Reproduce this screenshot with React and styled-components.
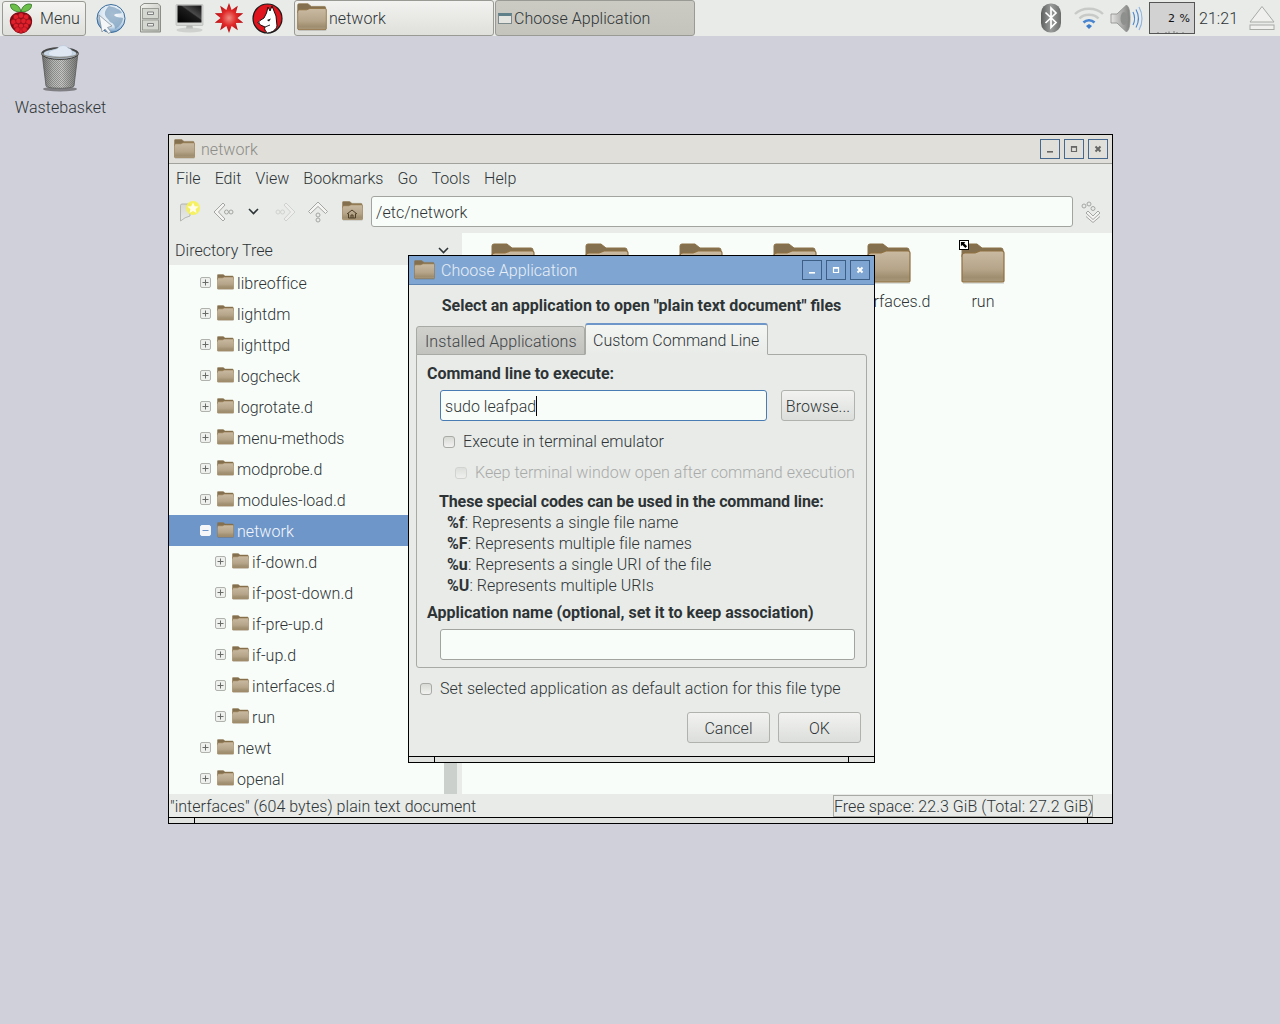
import React from 'react';
import styled, { createGlobalStyle } from 'styled-components';

const treeItems = [
    { name: 'libreoffice', level: 0 },
    { name: 'lightdm', level: 0 },
    { name: 'lighttpd', level: 0 },
    { name: 'logcheck', level: 0 },
    { name: 'logrotate.d', level: 0 },
    { name: 'menu-methods', level: 0 },
    { name: 'modprobe.d', level: 0 },
    { name: 'modules-load.d', level: 0 },
    { name: 'network', level: 0, open: true },
    { name: 'if-down.d', level: 1 },
    { name: 'if-post-down.d', level: 1 },
    { name: 'if-pre-up.d', level: 1 },
    { name: 'if-up.d', level: 1 },
    { name: 'interfaces.d', level: 1 },
    { name: 'run', level: 1 },
    { name: 'newt', level: 0 },
    { name: 'openal', level: 0 },
];

const menuItems = ['File', 'Edit', 'View', 'Bookmarks', 'Go', 'Tools', 'Help'];

const codes = [
    ['%f', ': Represents a single file name'],
    ['%F', ': Represents multiple file names'],
    ['%u', ': Represents a single URI of the file'],
    ['%U', ': Represents multiple URIs'],
];

const iconFolders = [
    { label: '' },
    { label: '' },
    { label: '' },
    { label: '' },
    { label: 'interfaces.d' },
    { label: 'run', link: true },
];

function FolderIcon({ size = 16, id = 'fld' }) {
    return (
        <svg width={size} height={size} viewBox="0 0 44 44" style={{ display: 'block', flex: 'none' }}>
            <defs>
                <linearGradient id={id} x1="0" y1="0" x2="0" y2="1">
                    <stop offset="0" stopColor="#c9baa2" />
                    <stop offset="0.6" stopColor="#b5a488" />
                    <stop offset="0.85" stopColor="#a08e70" />
                    <stop offset="1" stopColor="#a8977a" />
                </linearGradient>
            </defs>
            <path d="M1 3 Q1 1 3 1 H16 L21 5 H40 Q42 5 42 7 V14 H1 Z" fill="#84704f" stroke="#8b7148" strokeWidth="1" />
            <path d="M1 38 V13 Q1 10 4 10 H14 L19 8 H41 Q43 8 43 10 V38 Q43 39 41 39 H3 Q1 39 1 38 Z" fill={`url(#${id})`} stroke="#8f7040" strokeWidth="1.2" />
            <rect x="2" y="39.5" width="41" height="1.5" fill="#000" opacity="0.12" />
        </svg>
    );
}

function Raspberry() {
    const berries = [[8, 14], [13, 12.5], [18, 14], [5.5, 19], [10.5, 18], [15.5, 18], [20.5, 19], [8, 23], [13, 23], [18, 23], [13, 27.5], [9.5, 26.5], [16.5, 26.5]];
    return (
        <svg width="26" height="31" viewBox="0 0 26 31">
            <path d="M12.5 9 C8 9 2 7 2.5 1.5 C6 0 11 2 12.5 7 Z" fill="#6cc04a" stroke="#2d6b22" strokeWidth="0.8" />
            <path d="M13.5 9 C18 9 24 7 23.5 1.5 C20 0 15 2 13.5 7 Z" fill="#6cc04a" stroke="#2d6b22" strokeWidth="0.8" />
            <path d="M13 9 C22 9 25 15 24 20 C23 26 17 30.5 13 30.5 C9 30.5 3 26 2 20 C1 15 4 9 13 9 Z" fill="#7a0b14" />
            {berries.map(([x, y], i) => (
                <circle key={i} cx={x} cy={y} r="2.7" fill="#e0212b" stroke="#8c0f18" strokeWidth="0.5" />
            ))}
        </svg>
    );
}

function Globe() {
    return (
        <svg width="30" height="31" viewBox="0 0 30 31">
            <defs>
                <radialGradient id="globeFill" cx="0.55" cy="0.35" r="0.75">
                    <stop offset="0" stopColor="#ffffff" />
                    <stop offset="0.6" stopColor="#d4e3ef" />
                    <stop offset="1" stopColor="#2a6aa8" />
                </radialGradient>
            </defs>
            <circle cx="15" cy="15.5" r="14" fill="url(#globeFill)" stroke="#3c6c9c" strokeWidth="1" />
            <path d="M13 3 C18 4 24 6 26 10 C23 11 20 10 18 12 C20 15 24 14 27 15 C27 20 22 25 19 26 C19 22 17 20 14 19 C12 15 8 14 9 9 C10 6 11 5 13 3 Z" fill="#5d86ad" opacity="0.55" />
            <path d="M3 12 L6 29 L9 26 L12.5 30.5 L15 29 L11.5 24.5 L16 23 Z" fill="#f4f6f8" stroke="#8a949e" strokeWidth="0.8" />
        </svg>
    );
}

function Cabinet() {
    return (
        <svg width="23" height="30" viewBox="0 0 23 30">
            <defs>
                <linearGradient id="cabFill" x1="0" y1="0" x2="1" y2="1">
                    <stop offset="0" stopColor="#f2f2ee" />
                    <stop offset="1" stopColor="#b8bab4" />
                </linearGradient>
            </defs>
            <path d="M1.5 3 L5 0.5 H19 L21.5 3 V29 H1.5 Z" fill="url(#cabFill)" stroke="#8c8e88" strokeWidth="1" />
            <rect x="3.5" y="5.5" width="16" height="10" fill="#d4d6d0" stroke="#8c8e88" strokeWidth="0.8" />
            <rect x="3.5" y="17" width="16" height="10" fill="#d4d6d0" stroke="#8c8e88" strokeWidth="0.8" />
            <path d="M8.5 9 H14.5 V11.5 H8.5 Z M8.5 20.5 H14.5 V23 H8.5 Z" fill="#eeeeea" stroke="#66686a" strokeWidth="0.8" />
        </svg>
    );
}

function Monitor() {
    return (
        <svg width="29" height="29" viewBox="0 0 29 29">
            <defs>
                <linearGradient id="screenFill" x1="0" y1="1" x2="1" y2="0">
                    <stop offset="0" stopColor="#000" />
                    <stop offset="0.55" stopColor="#1c1c1c" />
                    <stop offset="0.6" stopColor="#4a4a4a" />
                    <stop offset="1" stopColor="#111" />
                </linearGradient>
            </defs>
            <rect x="1" y="0.5" width="27" height="21" rx="1" fill="#d5d7d5" stroke="#b0b2b0" strokeWidth="0.6" />
            <rect x="2.5" y="1.5" width="24" height="17" fill="url(#screenFill)" />
            <path d="M11.5 21.5 H17.5 L18 25 H11 Z" fill="#b4b6b4" />
            <ellipse cx="14.5" cy="26" rx="13" ry="2.5" fill="#c8cac8" opacity="0.8" />
        </svg>
    );
}

function MathStar() {
    const pts = [];
    for (let i = 0; i < 20; i++) {
        const r = i % 2 === 0 ? 15 : 8.5;
        const a = (Math.PI * i) / 10 - Math.PI / 2;
        pts.push(`${15 + r * Math.cos(a)},${15 + r * Math.sin(a)}`);
    }
    return (
        <svg width="30" height="30" viewBox="0 0 30 30">
            <defs>
                <radialGradient id="starFill" cx="0.5" cy="0.5" r="0.5">
                    <stop offset="0" stopColor="#f08a80" />
                    <stop offset="0.5" stopColor="#e02a2a" />
                    <stop offset="1" stopColor="#b50d12" />
                </radialGradient>
            </defs>
            <polygon points={pts.join(' ')} fill="url(#starFill)" />
        </svg>
    );
}

function Wolf() {
    return (
        <svg width="31" height="31" viewBox="0 0 31 31">
            <circle cx="15.5" cy="15.5" r="14.5" fill="#e0141c" stroke="#1a1a1a" strokeWidth="1.2" />
            <path d="M20 3 L24 13 L25 23 C24 27 20 29.5 15.5 30 C13 28 12 26 13 24 L8.5 22 L6 19.5 L8 17.5 L12 15 L14.5 10 L16 4 L18 8 Z" fill="#fff" stroke="#111" strokeWidth="1" />
            <path d="M15 17 L19 15.5 L17 18.5 Z M6 19.5 L8 19.5 L7.5 21 Z" fill="#111" />
            <path d="M13 24 L18 22" stroke="#111" strokeWidth="0.9" fill="none" />
        </svg>
    );
}

function Trash() {
    return (
        <svg width="40" height="48" viewBox="1 0 40 48">
            <defs>
                <linearGradient id="binFill" x1="0" y1="0" x2="1" y2="0">
                    <stop offset="0" stopColor="#6f716e" />
                    <stop offset="0.3" stopColor="#b4b6b3" />
                    <stop offset="0.55" stopColor="#c6c8c5" />
                    <stop offset="1" stopColor="#747673" />
                </linearGradient>
                <pattern id="binMesh" width="2" height="2" patternUnits="userSpaceOnUse">
                    <rect x="0" y="0" width="1" height="1" fill="#555" opacity="0.45" />
                    <rect x="1" y="1" width="1" height="1" fill="#555" opacity="0.45" />
                </pattern>
            </defs>
            <ellipse cx="20" cy="45" rx="17" ry="2.6" fill="#3c3c3c" opacity="0.55" />
            <path d="M2 9 L6 42 C7 45 33 45 34 42 L38 9 Z" fill="url(#binFill)" stroke="#5a5c5a" strokeWidth="0.8" />
            <path d="M2 9 L6 42 C7 45 33 45 34 42 L38 9 Z" fill="url(#binMesh)" />
            <ellipse cx="20" cy="9.5" rx="18.5" ry="6" fill="#4e504e" stroke="#333" strokeWidth="0.8" />
            <ellipse cx="20" cy="10" rx="16.5" ry="4.8" fill="#c9d6e6" />
            <path d="M8 10 C9 6 15 6 18 4 C20 0.5 27 1 28 4 C32 5 33 8 32 11 C26 14 13 14 8 10 Z" fill="#dfe8f2" stroke="#b4c4d6" strokeWidth="0.6" />
            <path d="M2 9 C3 15 37 15 38 9" fill="none" stroke="#8b8d8a" strokeWidth="1.4" />
        </svg>
    );
}

function Bluetooth() {
    return (
        <svg width="22" height="30" viewBox="0 0 22 30">
            <defs>
                <linearGradient id="btFill" x1="0" y1="0" x2="1" y2="0">
                    <stop offset="0" stopColor="#5d5f5f" />
                    <stop offset="0.5" stopColor="#9a9c9c" />
                    <stop offset="1" stopColor="#6a6c6c" />
                </linearGradient>
            </defs>
            <rect x="1" y="0.5" width="20" height="29" rx="9.5" fill="url(#btFill)" />
            <path d="M5.5 9.5 L16 19.5 L11 24.5 V5 L16 10 L5.5 20" fill="none" stroke="#fff" strokeWidth="1.7" />
        </svg>
    );
}

function Wifi() {
    return (
        <svg width="30" height="24" viewBox="0 0 30 24">
            <path d="M1 8 C8 1 22 1 29 8" fill="none" stroke="#c8cac8" strokeWidth="2.4" />
            <path d="M5.5 12.5 C10 7.5 20 7.5 24.5 12.5" fill="none" stroke="#c8cac8" strokeWidth="2.4" />
            <path d="M9.5 16.5 C12.5 13.5 17.5 13.5 20.5 16.5" fill="none" stroke="#4a86d0" strokeWidth="2.6" />
            <path d="M12 20 L15 18 L18 20 L15 23 Z" fill="#3d7cc8" />
        </svg>
    );
}

function Speaker() {
    return (
        <svg width="34" height="29" viewBox="0 0 34 29">
            <defs>
                <linearGradient id="spkFill" x1="0" y1="0" x2="1" y2="0">
                    <stop offset="0" stopColor="#e6e6e4" />
                    <stop offset="1" stopColor="#7e807e" />
                </linearGradient>
            </defs>
            <path d="M1 10 H7 L16 1.5 C19 1 20 8 20 14.5 C20 21 19 28 16 27.5 L7 19 H1 Z" fill="url(#spkFill)" stroke="#8a8c8a" strokeWidth="0.8" />
            <ellipse cx="14" cy="14.5" rx="3.5" ry="6.5" fill="#8e908e" />
            <path d="M23 8 C25 12 25 17 23 21" fill="none" stroke="#4a86d0" strokeWidth="1.1" />
            <path d="M26 5.5 C29 11 29 18 26 23.5" fill="none" stroke="#4a86d0" strokeWidth="1.1" />
            <path d="M29 3 C33 10 33 19 29 26" fill="none" stroke="#8fb4e0" strokeWidth="1.1" />
        </svg>
    );
}

function Eject() {
    return (
        <svg width="26" height="26" viewBox="0 0 26 26">
            <path d="M13 1.5 L25 17 H1 Z" fill="#f0f1ee" stroke="#a8aaa6" strokeWidth="1" />
            <rect x="1" y="20" width="24" height="4.5" fill="#f0f1ee" stroke="#a8aaa6" strokeWidth="1" />
        </svg>
    );
}

function NewFolderStar() {
    return (
        <svg width="24" height="24" viewBox="0 0 24 24">
            <defs>
                <linearGradient id="pageFill" x1="0" y1="0" x2="0" y2="1">
                    <stop offset="0" stopColor="#d8d8d4" />
                    <stop offset="1" stopColor="#e8ebe8" />
                </linearGradient>
            </defs>
            <path d="M2.5 21 V5.5 Q2.5 4 4 4 H12 V16 Q7 17 2.5 21 Z" fill="url(#pageFill)" stroke="#a8aaa6" strokeWidth="0.8" />
            <circle cx="15" cy="8" r="7" fill="#f7f24a" opacity="0.85" />
            <path d="M15 2.5 L16.7 6.2 L20.6 6.6 L17.6 9.2 L18.5 13 L15 11 L11.5 13 L12.4 9.2 L9.4 6.6 L13.3 6.2 Z" fill="#fffde8" />
        </svg>
    );
}

function ArrowIcon({ dir, dim }) {
    const stroke = dim ? '#d0d2ce' : '#a4a6a2';
    return (
        <svg width="22" height="22" viewBox="0 0 22 22" style={{ transform: dir === 'right' ? 'scaleX(-1)' : 'none' }}>
            <path d="M11 2 L2 11 L11 20 L13 18 L6.5 11 L13 4 Z" fill={dim ? '#eeeeec' : '#f4f4f2'} stroke={stroke} strokeWidth="1" />
            <circle cx="14.5" cy="11" r="2" fill="none" stroke={stroke} strokeWidth="1" />
            <circle cx="19" cy="11" r="2" fill="none" stroke={stroke} strokeWidth="1" />
        </svg>
    );
}

function UpIcon() {
    return (
        <svg width="22" height="22" viewBox="0 0 22 22">
            <path d="M11 1 L1.5 10.5 L3.5 12.5 L11 5.5 L18.5 12.5 L20.5 10.5 Z" fill="#f4f4f2" stroke="#a4a6a2" strokeWidth="1" />
            <circle cx="11" cy="14" r="2" fill="none" stroke="#a4a6a2" strokeWidth="1" />
            <circle cx="11" cy="19" r="2" fill="none" stroke="#a4a6a2" strokeWidth="1" />
        </svg>
    );
}

function HomeFolder() {
    return (
        <HomeWrap>
            <FolderIcon size={21} id="homeFld" />
            <HomeGlyph viewBox="0 0 12 10" width="12" height="10">
                <path d="M1 5 L6 1 L11 5 M2.5 4.5 V9 H9.5 V4.5 M5 9 V6 H7 V9" fill="none" stroke="#4e3e26" strokeWidth="1" />
            </HomeGlyph>
        </HomeWrap>
    );
}

function Chevron() {
    return (
        <svg width="11" height="7" viewBox="0 0 11 7">
            <path d="M1 1 L5.5 5.5 L10 1" fill="none" stroke="#2e3436" strokeWidth="1.6" />
        </svg>
    );
}

function DownDots() {
    return (
        <svg width="20" height="22" viewBox="0 0 20 22">
            <circle cx="3" cy="5" r="2" fill="none" stroke="#a4a6a2" strokeWidth="1" />
            <circle cx="8" cy="3" r="2" fill="none" stroke="#a4a6a2" strokeWidth="1" />
            <circle cx="12" cy="7.5" r="2" fill="none" stroke="#a4a6a2" strokeWidth="1" />
            <path d="M5 12 L12 18.5 L19 12 L17 10 L12 15 L7 10 Z M5 15.5 L12 21.5 L19 15.5" fill="#f4f4f2" stroke="#a4a6a2" strokeWidth="1" />
        </svg>
    );
}

function CpuGraph() {
    return (
        <CpuLines width="44" height="6" viewBox="0 0 44 6">
            <path d="M8 6 V5 M16 6 V5 M19 6 V4.5 M24 6 V4 M27 6 V5 M33 6 V5" stroke="#77797a" strokeWidth="1" />
        </CpuLines>
    );
}

function Expander({ open }) {
    return (
        <ExpanderBox $open={open}>
            <svg width="9" height="9" viewBox="0 0 9 9">
                <path d={open ? 'M1.5 4.5 H7.5' : 'M1.5 4.5 H7.5 M4.5 1.5 V7.5'} stroke={open ? '#6f96c8' : '#6a6c6a'} strokeWidth="1" fill="none" />
            </svg>
        </ExpanderBox>
    );
}

function WindowButtons({ $dark }) {
    const color = $dark ? '#fff' : '#666';
    return (
        <ButtonRow>
            <WinButton $dark={$dark}>
                <svg width="10" height="10" viewBox="0 0 10 10"><rect x="2" y="7" width="6" height="1.6" fill={color} /></svg>
            </WinButton>
            <WinButton $dark={$dark}>
                <svg width="10" height="10" viewBox="0 0 10 10"><path d="M2.5 2.5 H7.5 V7.5 H2.5 Z" fill="none" stroke={color} strokeWidth="1.2" /><rect x="2" y="2" width="6" height="1.8" fill={color} /></svg>
            </WinButton>
            <WinButton $dark={$dark}>
                <svg width="10" height="10" viewBox="0 0 10 10"><path d="M2.5 2.5 L7.5 7.5 M7.5 2.5 L2.5 7.5" stroke={color} strokeWidth="2" /></svg>
            </WinButton>
        </ButtonRow>
    );
}

export default function App() {
    return (
        <Desktop>
            <GlobalStyle />
            <Panel>
                <MenuButton>
                    <Raspberry />
                    <span>Menu</span>
                </MenuButton>
                <Launcher $w={39} $ml={5}><Globe /></Launcher>
                <Launcher $w={40}><Cabinet /></Launcher>
                <Launcher $w={39}><Monitor /></Launcher>
                <Launcher $w={39}><MathStar /></Launcher>
                <Launcher $w={39}><Wolf /></Launcher>
                <TaskButton $ml={7}>
                    <FolderIcon size={30} id="taskFld" />
                    <span>network</span>
                </TaskButton>
                <TaskButton $active $ml={1}>
                    <TaskMiniWindow />
                    <span>Choose Application</span>
                </TaskButton>
                <Tray>
                    <TraySlot $w={38}><Bluetooth /></TraySlot>
                    <TraySlot $w={38}><Wifi /></TraySlot>
                    <TraySlot $w={38}><Speaker /></TraySlot>
                    <CpuBox>
                        <CpuValue>2 %</CpuValue>
                        <CpuGraph />
                    </CpuBox>
                    <Clock>21:21</Clock>
                    <TraySlot $w={30}><Eject /></TraySlot>
                </Tray>
            </Panel>

            <DesktopIcon>
                <Trash />
                <span>Wastebasket</span>
            </DesktopIcon>

            <ManagerWindow>
                <TitleBar>
                    <FolderIcon size={21} id="winFld" />
                    <TitleText>network</TitleText>
                    <WindowButtons />
                </TitleBar>
                <MenuBar>
                    {menuItems.map((item) => <MenuItem key={item}>{item}</MenuItem>)}
                </MenuBar>
                <Toolbar>
                    <ToolSlot $w={24}><NewFolderStar /></ToolSlot>
                    <ToolSlot $w={22} $ml={10}><ArrowIcon dir="left" /></ToolSlot>
                    <ToolSlot $w={16} $ml={11}><Chevron /></ToolSlot>
                    <ToolSlot $w={22} $ml={14}><ArrowIcon dir="right" dim /></ToolSlot>
                    <ToolSlot $w={22} $ml={10}><UpIcon /></ToolSlot>
                    <ToolSlot $w={22} $ml={12}><HomeFolder /></ToolSlot>
                    <AddressBar>/etc/network</AddressBar>
                    <ToolSlot $w={20} $ml={8}><DownDots /></ToolSlot>
                </Toolbar>
                <Panes>
                    <SidePane>
                        <SideHeader>
                            <span>Directory Tree</span>
                            <Chevron />
                        </SideHeader>
                        <SideBody>
                            <Tree>
                                {treeItems.map((item) => (
                                    <TreeRow key={item.name} $level={item.level} $selected={item.open}>
                                        <Expander open={item.open} />
                                        <FolderIcon size={17} id={`tree-${item.name}`} />
                                        <span>{item.name}</span>
                                    </TreeRow>
                                ))}
                            </Tree>
                            <Trough />
                        </SideBody>
                    </SidePane>
                    <IconView>
                        {iconFolders.map((f, i) => (
                            <IconCell key={i}>
                                <FolderIcon size={44} id={`big-${i}`} />
                                {f.link && <LinkBadge><svg width="8" height="8" viewBox="0 0 9 9"><path d="M1 1 H6 L4.6 2.6 L8 6 L6 8 L2.6 4.6 L1 6 Z" fill="#000" /></svg></LinkBadge>}
                                <span>{f.label}</span>
                            </IconCell>
                        ))}
                    </IconView>
                </Panes>
                <StatusBar>
                    <StatusText>"interfaces" (604 bytes) plain text document</StatusText>
                    <FreeSpace>Free space: 22.3 GiB (Total: 27.2 GiB)</FreeSpace>
                </StatusBar>
                <ResizeStrip $left={25} $right={24} />
            </ManagerWindow>

            <Dialog>
                <DialogTitle>
                    <FolderIcon size={21} id="dlgFld" />
                    <DialogTitleText>Choose Application</DialogTitleText>
                    <WindowButtons $dark />
                </DialogTitle>
                <DialogBody>
                    <Heading>Select an application to open "plain text document" files</Heading>
                    <Tabs>
                        <Tab $w={169}>Installed Applications</Tab>
                        <Tab $w={183} $active>Custom Command Line</Tab>
                    </Tabs>
                    <Frame>
                        <BoldLabel>Command line to execute:</BoldLabel>
                        <CommandRow>
                            <TextField $focus>sudo leafpad<Caret /></TextField>
                            <PushButton $w={74}>Browse...</PushButton>
                        </CommandRow>
                        <CheckRow $ml={16} $mt={10}>
                            <CheckBox />
                            <span>Execute in terminal emulator</span>
                        </CheckRow>
                        <CheckRow $ml={28} $mt={10} $disabled>
                            <CheckBox $disabled />
                            <span>Keep terminal window open after command execution</span>
                        </CheckRow>
                        <CodesTitle>These special codes can be used in the command line:</CodesTitle>
                        <CodeList>
                            {codes.map(([code, text]) => (
                                <CodeLine key={code}><b>{code}</b>{text}</CodeLine>
                            ))}
                        </CodeList>
                        <NameLabel>Application name (optional, set it to keep association)</NameLabel>
                        <NameField />
                    </Frame>
                    <CheckRow $ml={4} $mt={10}>
                        <CheckBox />
                        <span>Set selected application as default action for this file type</span>
                    </CheckRow>
                    <DialogActions>
                        <PushButton $w={83}>Cancel</PushButton>
                        <PushButton $w={83}>OK</PushButton>
                    </DialogActions>
                </DialogBody>
                <ResizeStrip $left={25} $right={25} />
            </Dialog>
        </Desktop>
    );
}


// styled component
const GlobalStyle = createGlobalStyle`
    html, body {
        margin: 0;
        padding: 0;
        height: 100%;
    }
    body {
        font-family: Roboto, "Liberation Sans", sans-serif;
        font-weight: 300;
        font-size: 16px;
        letter-spacing: 0.04px;
        color: #2e3436;
    }
`

const Desktop = styled.div`
    position: relative;
    width: 1280px;
    height: 1024px;
    overflow: hidden;
    background: #d0d0da;
`

const Panel = styled.div`
    display: flex;
    align-items: center;
    height: 36px;
    padding-left: 2px;
    box-sizing: border-box;
    background: #e8ebe8;
`

const MenuButton = styled.div`
    display: flex;
    align-items: center;
    gap: 6px;
    box-sizing: border-box;
    width: 84px;
    height: 35px;
    padding-left: 5px;
    border: 1px solid #9a9a94;
    border-radius: 3px;
    background: linear-gradient(#f4f5f2, #dedfdb);
`

const Launcher = styled.div`
    display: flex;
    align-items: center;
    justify-content: center;
    width: ${(p) => p.$w}px;
    margin-left: ${(p) => p.$ml || 0}px;
`

const TaskButton = styled.div`
    display: flex;
    align-items: center;
    box-sizing: border-box;
    width: 200px;
    height: 36px;
    margin-left: ${(p) => p.$ml}px;
    padding-left: 2px;
    gap: 2px;
    overflow: hidden;
    border: 1px solid #9a9a94;
    border-radius: 3px;
    background: ${(p) => (p.$active ? 'linear-gradient(#cbcbc4, #c4c4bd)' : 'linear-gradient(#f2f3f0, #dfdfdb)')};
`

const TaskMiniWindow = styled.div`
    flex: none;
    width: 14px;
    height: 11px;
    box-sizing: border-box;
    border: 1px solid #7d8a8c;
    border-top: 3px solid #5f8088;
    background: #e4e4e0;
`

const Tray = styled.div`
    display: flex;
    align-items: center;
    margin-left: auto;
    padding-right: 3px;
`

const TraySlot = styled.div`
    display: flex;
    align-items: center;
    justify-content: center;
    width: ${(p) => p.$w}px;
`

const CpuBox = styled.div`
    position: relative;
    display: flex;
    align-items: center;
    justify-content: flex-end;
    box-sizing: border-box;
    width: 46px;
    height: 32px;
    margin-left: 3px;
    padding-right: 4px;
    border: 1px solid #555;
    background: #d2d2d2;
`

const CpuLines = styled.svg`
    position: absolute;
    left: 0;
    bottom: 0;
`

const CpuValue = styled.span`
    font-family: "DejaVu Sans", sans-serif;
    font-weight: 400;
    font-size: 11px;
    color: #111;
    white-space: pre;
    word-spacing: 1px;
`

const Clock = styled.div`
    width: 52px;
    padding-left: 4px;
    box-sizing: border-box;
`

const DesktopIcon = styled.div`
    position: absolute;
    left: 0;
    top: 44px;
    width: 121px;
    display: flex;
    flex-direction: column;
    align-items: center;
    gap: 6px;
    line-height: 20px;
`

const ManagerWindow = styled.div`
    position: absolute;
    left: 168px;
    top: 134px;
    width: 945px;
    height: 690px;
    box-sizing: border-box;
    display: flex;
    flex-direction: column;
    border: 1px solid #000;
    background: #e8ebe8;
`

const TitleBar = styled.div`
    display: flex;
    align-items: center;
    flex: none;
    box-sizing: border-box;
    height: 29px;
    padding: 0 4px 0 5px;
    background: #e0dfd9;
    border-bottom: 1px solid #a2a29c;
`

const TitleText = styled.span`
    margin-left: 6px;
    color: #8c8c88;
`

const ButtonRow = styled.div`
    display: flex;
    gap: 4px;
    margin-left: auto;
`

const WinButton = styled.div`
    display: flex;
    align-items: center;
    justify-content: center;
    box-sizing: border-box;
    width: 20px;
    height: 20px;
    border: 1px solid ${(p) => (p.$dark ? '#3d5f86' : '#46688e')};
`

const MenuBar = styled.div`
    display: flex;
    flex: none;
    height: 29px;
    align-items: center;
`

const MenuItem = styled.div`
    padding: 0 7px;
`

const Toolbar = styled.div`
    display: flex;
    align-items: center;
    flex: none;
    box-sizing: border-box;
    height: 40px;
    padding: 0 0 3px 9px;
`

const ToolSlot = styled.div`
    display: flex;
    align-items: center;
    justify-content: center;
    flex: none;
    width: ${(p) => p.$w}px;
    margin-left: ${(p) => p.$ml || 0}px;
`

const HomeWrap = styled.div`
    position: relative;
`

const HomeGlyph = styled.svg`
    position: absolute;
    left: 4px;
    top: 8px;
`

const AddressBar = styled.div`
    flex: none;
    width: 702px;
    height: 31px;
    margin-left: 8px;
    box-sizing: border-box;
    padding: 1px 0 0 4px;
    line-height: 29px;
    border: 1px solid #a2a4a0;
    border-radius: 3px;
    background: #f9fdf9;
`

const Panes = styled.div`
    display: flex;
    flex: 1;
    min-height: 0;
`

const SidePane = styled.div`
    display: flex;
    flex-direction: column;
    flex: none;
    width: 288px;
`

const SideHeader = styled.div`
    display: flex;
    align-items: center;
    justify-content: space-between;
    flex: none;
    height: 32px;
    padding: 3px 8px 0 6px;
    box-sizing: border-box;
`

const SideBody = styled.div`
    display: flex;
    flex: 1;
    min-height: 0;
`

const Tree = styled.div`
    flex: none;
    width: 275px;
    box-sizing: border-box;
    padding-top: 2px;
    background: #f9fdf9;
`

const TreeRow = styled.div`
    display: flex;
    align-items: center;
    height: 31px;
    box-sizing: border-box;
    padding-left: ${(p) => 31 + p.$level * 15}px;
    color: ${(p) => (p.$selected ? '#f4f8fc' : 'inherit')};
    background: ${(p) => (p.$selected ? '#6f96c8' : 'transparent')};

    & > span {
        margin: 2px 0 0 3px;
    }
`

const ExpanderBox = styled.div`
    flex: none;
    width: 11px;
    height: 11px;
    margin-right: 6px;
    box-sizing: border-box;
    display: flex;
    align-items: center;
    justify-content: center;
    border: 1px solid ${(p) => (p.$open ? '#f4f6f8' : '#b0b2ae')};
    border-radius: 2px;
    background: ${(p) => (p.$open ? '#f4f6f8' : '#eef0ee')};
    overflow: hidden;
`

const Trough = styled.div`
    flex: none;
    width: 13px;
    background: #ccd0cc;
`

const IconView = styled.div`
    display: flex;
    flex: 1;
    margin-left: 5px;
    padding: 10px 0 0 4px;
    background: #f9fdf9;
`

const IconCell = styled.div`
    position: relative;
    flex: none;
    width: 94px;
    height: 80px;
    display: flex;
    flex-direction: column;
    align-items: center;
    gap: 5px;
    line-height: 20px;
`

const LinkBadge = styled.div`
    position: absolute;
    left: 23px;
    top: -3px;
    width: 10px;
    height: 10px;
    box-sizing: border-box;
    border: 1px solid #000;
    background: #fff;
    display: flex;
    align-items: center;
    justify-content: center;
    overflow: hidden;
`

const StatusBar = styled.div`
    display: flex;
    align-items: center;
    flex: none;
    height: 23px;
    padding: 0 19px 0 1px;
    border-bottom: 1px solid #000;
`

const StatusText = styled.span`
    flex: 1;
    margin-top: 2px;
`

const FreeSpace = styled.span`
    box-sizing: border-box;
    width: 260px;
    height: 22px;
    line-height: 21px;
    border: 1px solid #a8aaa6;
    white-space: nowrap;
`

const ResizeStrip = styled.div`
    flex: none;
    height: 5px;
    background:
        linear-gradient(#000, #000) ${(p) => p.$left}px 0 / 1px 100% no-repeat,
        linear-gradient(#000, #000) calc(100% - ${(p) => p.$right}px) 0 / 1px 100% no-repeat,
        #dfe2df;
`

const Dialog = styled.div`
    position: absolute;
    left: 408px;
    top: 255px;
    width: 467px;
    height: 508px;
    box-sizing: border-box;
    display: flex;
    flex-direction: column;
    border: 1px solid #000;
    background: #e8ebe8;
`

const DialogTitle = styled.div`
    display: flex;
    align-items: center;
    flex: none;
    box-sizing: border-box;
    height: 29px;
    padding: 0 4px 0 5px;
    background: #7fa6d2;
    border-bottom: 1px solid #5f86b2;
`

const DialogTitleText = styled.span`
    margin-left: 6px;
    color: #e8eef6;
`

const DialogBody = styled.div`
    flex: 1;
    min-height: 0;
    box-sizing: border-box;
    padding: 0 7px;
    border-bottom: 1px solid #000;
    display: flex;
    flex-direction: column;
`

const Heading = styled.div`
    font-weight: 700;
    letter-spacing: 0;
    text-align: center;
    line-height: 20px;
    margin-top: 11px;
`

const Tabs = styled.div`
    display: flex;
    align-items: flex-end;
    height: 32px;
    margin-top: 7px;
    position: relative;
    z-index: 1;
    margin-bottom: -1px;
`

const Tab = styled.div`
    box-sizing: border-box;
    display: flex;
    align-items: center;
    flex: none;
    width: ${(p) => p.$w}px;
    padding: ${(p) => (p.$active ? '1px 0 0 7px' : '2px 0 0 8px')};
    height: ${(p) => (p.$active ? '32px' : '29px')};
    letter-spacing: ${(p) => (p.$active ? '0' : '0.1px')};
    white-space: nowrap;
    color: ${(p) => (p.$active ? '#2e3436' : '#3e4446')};
    border: 1px solid #a8aaa6;
    border-top: ${(p) => (p.$active ? '2px solid #6f96c8' : '1px solid #a8aaa6')};
    border-bottom: ${(p) => (p.$active ? '1px solid #e8ebe8' : '1px solid #a8aaa6')};
    border-radius: 3px 3px 0 0;
    background: ${(p) => (p.$active ? 'linear-gradient(#f4f6f4, #e8ebe8)' : 'linear-gradient(#d0d0cc, #c2c2be)')};
`

const Frame = styled.div`
    box-sizing: border-box;
    height: 314px;
    padding: 9px 11px 0 10px;
    border: 1px solid #a8aaa6;
    border-radius: 0 3px 3px 3px;
`

const BoldLabel = styled.div`
    font-weight: 700;
    letter-spacing: 0;
    line-height: 20px;
`

const CommandRow = styled.div`
    display: flex;
    gap: 14px;
    margin: 6px 0 0 13px;
`

const TextField = styled.div`
    box-sizing: border-box;
    flex: 1;
    height: 31px;
    padding: 1px 0 0 4px;
    line-height: 29px;
    border: 1px solid ${(p) => (p.$focus ? '#4a7cb4' : '#a2a4a0')};
    border-radius: 3px;
    background: #f9fdf9;
    display: flex;
    align-items: center;
`

const Caret = styled.span`
    width: 1px;
    height: 20px;
    background: #000;
`

const PushButton = styled.div`
    box-sizing: border-box;
    flex: none;
    width: ${(p) => p.$w}px;
    height: 31px;
    padding-top: 1px;
    line-height: 29px;
    text-align: center;
    border: 1px solid #b0b2ae;
    border-radius: 3px;
    background: linear-gradient(#f2f3f0, #dcdedb);
`

const CheckRow = styled.div`
    display: flex;
    align-items: center;
    height: 21px;
    margin-left: ${(p) => p.$ml}px;
    margin-top: ${(p) => p.$mt}px;
    color: ${(p) => (p.$disabled ? '#a8aaa8' : 'inherit')};
    white-space: nowrap;

    & > span {
        margin-left: 8px;
    }
`

const CheckBox = styled.div`
    flex: none;
    box-sizing: border-box;
    width: 12px;
    height: 12px;
    border: 1px solid ${(p) => (p.$disabled ? '#c8cac6' : '#a8aaa6')};
    border-radius: 3px;
    background: linear-gradient(#d8dad6, #f2f3f0);
    opacity: ${(p) => (p.$disabled ? 0.7 : 1)};
`

const CodesTitle = styled.div`
    font-weight: 700;
    letter-spacing: -0.13px;
    line-height: 21px;
    margin: 8px 0 0 12px;
    white-space: nowrap;
`

const CodeList = styled.div`
    margin-left: 20px;
`

const CodeLine = styled.div`
    line-height: 21px;

    & b {
        font-weight: 700;
    }
`

const NameLabel = styled.div`
    font-weight: 700;
    letter-spacing: 0;
    line-height: 21px;
    margin-top: 6px;
    white-space: nowrap;
`

const NameField = styled(TextField)`
    margin: 6px 0 0 13px;
`

const DialogActions = styled.div`
    display: flex;
    justify-content: flex-end;
    gap: 8px;
    margin-top: 13px;
    padding-right: 6px;
`
